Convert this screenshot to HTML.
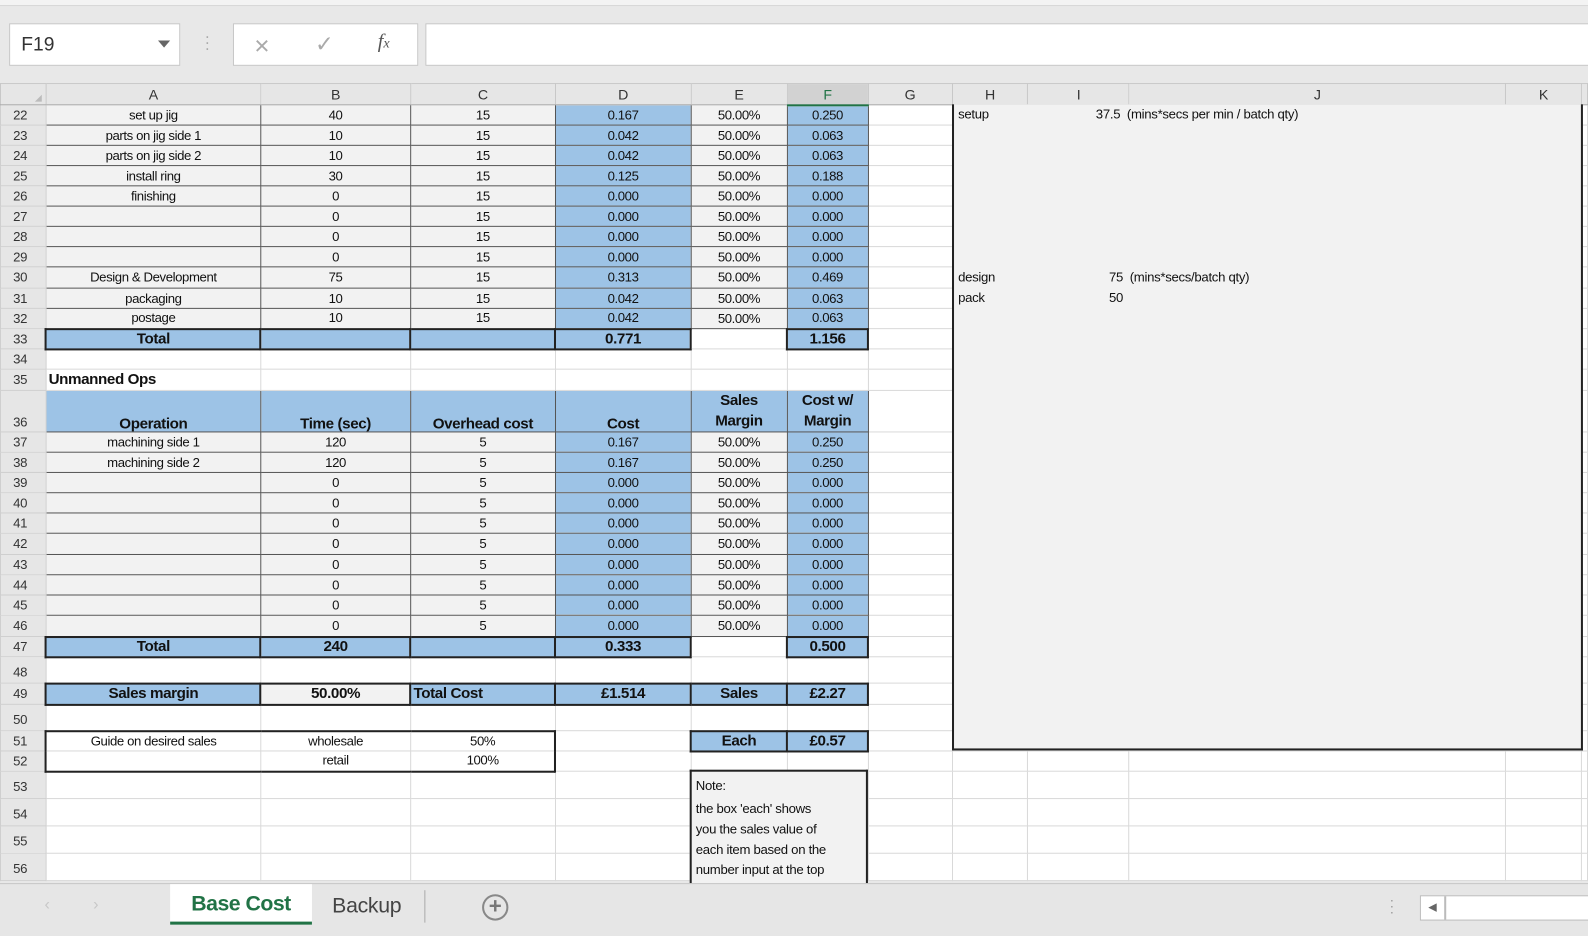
<!DOCTYPE html>
<html><head><meta charset="utf-8"><style>
*{margin:0;padding:0;box-sizing:border-box}
html,body{width:1588px;height:936px;overflow:hidden;background:#e6e6e6}
#w{position:absolute;left:0;top:0;width:1568px;height:924px;transform:scale(1.01276);transform-origin:0 0;font-family:"Liberation Sans",Arial,sans-serif;background:#e8e8e8}
.abs{position:absolute}
table{position:absolute;left:0;top:82px;border-collapse:collapse;table-layout:fixed;background:#fff;font-size:13px;letter-spacing:-0.4px;color:#111}
td{border:1px solid #d9d9d9;text-align:center;white-space:nowrap;overflow:hidden;padding:0 2px;line-height:14px}
td.rn{background:#e6e6e6;color:#333;text-align:left;padding-left:12px;border-color:#cfcfcf;font-size:13px}
tr.hd td{background:#e6e6e6;color:#333;font-size:14px;border-color:#c8c8c8;border-bottom:1px solid #aaa}
td.g{background:#f2f2f2;border:1px solid #555}
td.b{background:#9dc3e6;border:1px solid #555}
td.B{background:#9dc3e6;border:2px solid #222;font-weight:bold;font-size:15px}
td.W{border:2px solid #222;font-weight:bold;font-size:15px;background:#f2f2f2}
.bold{font-weight:bold;font-size:15px}
</style></head><body><div id="w">
<div class="abs" style="left:0;top:0;width:1568px;height:6px;background:#f3f3f3;border-bottom:1px solid #d6d6d6"></div>
<div class="abs" style="left:9px;top:23px;width:169px;height:42px;background:#fff;border:1px solid #c6c6c6;font-size:19px;color:#333;padding:10px 0 0 11px">F19<span style="position:absolute;left:146px;top:16px;width:0;height:0;border-left:6px solid transparent;border-right:6px solid transparent;border-top:7px solid #666"></span></div>
<div class="abs" style="left:202px;top:34px;color:#aaa;font-size:16px;line-height:6px">·<br>·<br>·</div>
<div class="abs" style="left:230px;top:23px;width:183px;height:42px;background:#fff;border:1px solid #c6c6c6;color:#aaa">
<span class="abs" style="left:20px;top:6px;font-size:26px">×</span>
<span class="abs" style="left:80px;top:7px;font-size:22px">✓</span>
<span class="abs" style="left:142px;top:6px;font-size:20px;font-family:'Liberation Serif',serif;font-style:italic;color:#555">f<span style="font-size:14px">x</span></span></div>
<div class="abs" style="left:420px;top:23px;width:1160px;height:42px;background:#fff;border:1px solid #c6c6c6"></div>

<table>
<colgroup><col style="width:45px"><col style="width:212px"><col style="width:148px"><col style="width:143px"><col style="width:134px"><col style="width:95px"><col style="width:80px"><col style="width:83px"><col style="width:75px"><col style="width:100px"><col style="width:372px"><col style="width:75px"><col style="width:6px"></colgroup>
<tr class="hd" style="height:21px"><td class="rn" style="padding:0"><span style="color:#bbb;font-size:9px;float:right;margin:6px 4px 0 0">◢</span></td><td>A</td><td>B</td><td>C</td><td>D</td><td>E</td><td style="background:#d2d2d2;color:#217346;border-bottom:2px solid #217346">F</td><td>G</td><td>H</td><td>I</td><td>J</td><td>K</td><td></td></tr>
<tr style="height:20px"><td class="rn">22</td><td class="g">set up jig</td><td class="g">40</td><td class="g">15</td><td class="b">0.167</td><td class="g">50.00%</td><td class="b">0.250</td><td></td><td></td><td></td><td></td><td></td><td></td></tr>
<tr style="height:20px"><td class="rn">23</td><td class="g">parts on jig side 1</td><td class="g">10</td><td class="g">15</td><td class="b">0.042</td><td class="g">50.00%</td><td class="b">0.063</td><td></td><td></td><td></td><td></td><td></td><td></td></tr>
<tr style="height:20px"><td class="rn">24</td><td class="g">parts on jig side 2</td><td class="g">10</td><td class="g">15</td><td class="b">0.042</td><td class="g">50.00%</td><td class="b">0.063</td><td></td><td></td><td></td><td></td><td></td><td></td></tr>
<tr style="height:20px"><td class="rn">25</td><td class="g">install ring</td><td class="g">30</td><td class="g">15</td><td class="b">0.125</td><td class="g">50.00%</td><td class="b">0.188</td><td></td><td></td><td></td><td></td><td></td><td></td></tr>
<tr style="height:20px"><td class="rn">26</td><td class="g">finishing</td><td class="g">0</td><td class="g">15</td><td class="b">0.000</td><td class="g">50.00%</td><td class="b">0.000</td><td></td><td></td><td></td><td></td><td></td><td></td></tr>
<tr style="height:20px"><td class="rn">27</td><td class="g"></td><td class="g">0</td><td class="g">15</td><td class="b">0.000</td><td class="g">50.00%</td><td class="b">0.000</td><td></td><td></td><td></td><td></td><td></td><td></td></tr>
<tr style="height:20px"><td class="rn">28</td><td class="g"></td><td class="g">0</td><td class="g">15</td><td class="b">0.000</td><td class="g">50.00%</td><td class="b">0.000</td><td></td><td></td><td></td><td></td><td></td><td></td></tr>
<tr style="height:20px"><td class="rn">29</td><td class="g"></td><td class="g">0</td><td class="g">15</td><td class="b">0.000</td><td class="g">50.00%</td><td class="b">0.000</td><td></td><td></td><td></td><td></td><td></td><td></td></tr>
<tr style="height:21px"><td class="rn">30</td><td class="g">Design &amp; Development</td><td class="g">75</td><td class="g">15</td><td class="b">0.313</td><td class="g">50.00%</td><td class="b">0.469</td><td></td><td></td><td></td><td></td><td></td><td></td></tr>
<tr style="height:20px"><td class="rn">31</td><td class="g">packaging</td><td class="g">10</td><td class="g">15</td><td class="b">0.042</td><td class="g">50.00%</td><td class="b">0.063</td><td></td><td></td><td></td><td></td><td></td><td></td></tr>
<tr style="height:20px"><td class="rn">32</td><td class="g">postage</td><td class="g">10</td><td class="g">15</td><td class="b">0.042</td><td class="g">50.00%</td><td class="b">0.063</td><td></td><td></td><td></td><td></td><td></td><td></td></tr>
<tr style="height:20px"><td class="rn">33</td><td class="B">Total</td><td class="B"></td><td class="B"></td><td class="B">0.771</td><td></td><td class="B">1.156</td><td></td><td></td><td></td><td></td><td></td><td></td></tr>
<tr style="height:20px"><td class="rn">34</td><td></td><td></td><td></td><td></td><td></td><td></td><td></td><td></td><td></td><td></td><td></td><td></td></tr>
<tr style="height:21px"><td class="rn">35</td><td class="bold" style="text-align:left">Unmanned Ops</td><td></td><td></td><td></td><td></td><td></td><td></td><td></td><td></td><td></td><td></td><td></td></tr>
<tr style="height:40px"><td class="rn" style="vertical-align:bottom;padding-bottom:2px">36</td><td class="B" style="vertical-align:bottom;font-weight:bold;border-width:1px;border-color:#555">Operation</td><td class="B" style="vertical-align:bottom;border-width:1px;border-color:#555">Time (sec)</td><td class="B" style="vertical-align:bottom;border-width:1px;border-color:#555">Overhead cost</td><td class="B" style="vertical-align:bottom;border-width:1px;border-color:#555">Cost</td><td class="B" style="vertical-align:bottom;border-width:1px;border-color:#555;line-height:20px">Sales<br>Margin</td><td class="B" style="vertical-align:bottom;border-width:1px;border-color:#555;line-height:20px">Cost w/<br>Margin</td><td></td><td></td><td></td><td></td><td></td><td></td></tr>
<tr style="height:20px"><td class="rn">37</td><td class="g">machining side 1</td><td class="g">120</td><td class="g">5</td><td class="b">0.167</td><td class="g">50.00%</td><td class="b">0.250</td><td></td><td></td><td></td><td></td><td></td><td></td></tr>
<tr style="height:20px"><td class="rn">38</td><td class="g">machining side 2</td><td class="g">120</td><td class="g">5</td><td class="b">0.167</td><td class="g">50.00%</td><td class="b">0.250</td><td></td><td></td><td></td><td></td><td></td><td></td></tr>
<tr style="height:20px"><td class="rn">39</td><td class="g"></td><td class="g">0</td><td class="g">5</td><td class="b">0.000</td><td class="g">50.00%</td><td class="b">0.000</td><td></td><td></td><td></td><td></td><td></td><td></td></tr>
<tr style="height:20px"><td class="rn">40</td><td class="g"></td><td class="g">0</td><td class="g">5</td><td class="b">0.000</td><td class="g">50.00%</td><td class="b">0.000</td><td></td><td></td><td></td><td></td><td></td><td></td></tr>
<tr style="height:20px"><td class="rn">41</td><td class="g"></td><td class="g">0</td><td class="g">5</td><td class="b">0.000</td><td class="g">50.00%</td><td class="b">0.000</td><td></td><td></td><td></td><td></td><td></td><td></td></tr>
<tr style="height:21px"><td class="rn">42</td><td class="g"></td><td class="g">0</td><td class="g">5</td><td class="b">0.000</td><td class="g">50.00%</td><td class="b">0.000</td><td></td><td></td><td></td><td></td><td></td><td></td></tr>
<tr style="height:20px"><td class="rn">43</td><td class="g"></td><td class="g">0</td><td class="g">5</td><td class="b">0.000</td><td class="g">50.00%</td><td class="b">0.000</td><td></td><td></td><td></td><td></td><td></td><td></td></tr>
<tr style="height:20px"><td class="rn">44</td><td class="g"></td><td class="g">0</td><td class="g">5</td><td class="b">0.000</td><td class="g">50.00%</td><td class="b">0.000</td><td></td><td></td><td></td><td></td><td></td><td></td></tr>
<tr style="height:20px"><td class="rn">45</td><td class="g"></td><td class="g">0</td><td class="g">5</td><td class="b">0.000</td><td class="g">50.00%</td><td class="b">0.000</td><td></td><td></td><td></td><td></td><td></td><td></td></tr>
<tr style="height:21px"><td class="rn">46</td><td class="g"></td><td class="g">0</td><td class="g">5</td><td class="b">0.000</td><td class="g">50.00%</td><td class="b">0.000</td><td></td><td></td><td></td><td></td><td></td><td></td></tr>
<tr style="height:20px"><td class="rn">47</td><td class="B">Total</td><td class="B">240</td><td class="B"></td><td class="B">0.333</td><td></td><td class="B">0.500</td><td></td><td></td><td></td><td></td><td></td><td></td></tr>
<tr style="height:26px"><td class="rn" style="vertical-align:bottom;padding-bottom:3px">48</td><td></td><td></td><td></td><td></td><td></td><td></td><td></td><td></td><td></td><td></td><td></td><td></td></tr>
<tr style="height:21px"><td class="rn">49</td><td class="B">Sales margin</td><td class="W">50.00%</td><td class="B" style="text-align:left">Total Cost</td><td class="B">£1.514</td><td class="B">Sales</td><td class="B">£2.27</td><td></td><td></td><td></td><td></td><td></td><td></td></tr>
<tr style="height:26px"><td class="rn" style="vertical-align:bottom;padding-bottom:3px">50</td><td></td><td></td><td></td><td></td><td></td><td></td><td></td><td></td><td></td><td></td><td></td><td></td></tr>
<tr style="height:20px"><td class="rn">51</td><td style="border-left:2px solid #222;border-top:2px solid #222">Guide on desired sales</td><td style="border-top:2px solid #222">wholesale</td><td style="border-top:2px solid #222;border-right:2px solid #222">50%</td><td></td><td class="B">Each</td><td class="B">£0.57</td><td></td><td></td><td></td><td></td><td></td><td></td></tr>
<tr style="height:20px"><td class="rn">52</td><td style="border-left:2px solid #222;border-bottom:2px solid #222"></td><td style="border-bottom:2px solid #222">retail</td><td style="border-bottom:2px solid #222;border-right:2px solid #222">100%</td><td></td><td></td><td></td><td></td><td></td><td></td><td></td><td></td><td></td></tr>
<tr style="height:27px"><td class="rn" style="padding-top:4px">53</td><td></td><td></td><td></td><td></td><td></td><td></td><td></td><td></td><td></td><td></td><td></td><td></td></tr>
<tr style="height:27px"><td class="rn" style="padding-top:4px">54</td><td></td><td></td><td></td><td></td><td></td><td></td><td></td><td></td><td></td><td></td><td></td><td></td></tr>
<tr style="height:27px"><td class="rn" style="padding-top:4px">55</td><td></td><td></td><td></td><td></td><td></td><td></td><td></td><td></td><td></td><td></td><td></td><td></td></tr>
<tr style="height:27px"><td class="rn" style="padding-top:4px">56</td><td></td><td></td><td></td><td></td><td></td><td></td><td></td><td></td><td></td><td></td><td></td><td></td></tr>
</table>

<div class="abs" style="left:940px;top:103px;width:623px;height:638px;background:#f2f2f2;border:2px solid #222;border-top:none;font-size:13px;letter-spacing:-0.3px;color:#111">
<span class="abs" style="left:4px;top:2px">setup</span>
<span class="abs" style="left:140px;top:2px">37.5&nbsp; (mins*secs per min / batch qty)</span>
<span class="abs" style="left:4px;top:163px">design</span>
<span class="abs" style="left:153px;top:163px">75&nbsp; (mins*secs/batch qty)</span>
<span class="abs" style="left:4px;top:183px">pack</span>
<span class="abs" style="left:153px;top:183px">50</span>
</div>

<div class="abs" style="left:681px;top:760px;width:176px;height:114px;background:#f2f2f2;border:2px solid #222;border-bottom:none;font-size:13px;letter-spacing:-0.3px;color:#111;padding:4px 0 0 4px;line-height:20px">Note:<br><span style="display:block;margin-top:3px">the box 'each' shows<br>you the sales value of<br>each item based on the<br>number input at the top</span></div>

<div class="abs" style="left:0;top:872px;width:1568px;height:52px;background:#e6e6e6;border-top:1px solid #c6c6c6">
<span class="abs" style="left:44px;top:12px;color:#c8c8c8;font-size:16px">‹</span>
<span class="abs" style="left:92px;top:12px;color:#c8c8c8;font-size:16px">›</span>
<div class="abs" style="left:168px;top:0;width:140px;height:40px;background:#fff;border-bottom:3px solid #217346;color:#217346;font-weight:bold;font-size:21px;text-align:center;line-height:40px;letter-spacing:-0.5px">Base Cost</div>
<div class="abs" style="left:328px;top:0;height:40px;line-height:43px;color:#444;font-size:21px;letter-spacing:-0.3px">Backup</div>
<div class="abs" style="left:419px;top:6px;width:1px;height:32px;background:#aaa"></div>
<div class="abs" style="left:476px;top:10px;width:26px;height:26px;border:2px solid #888;border-radius:50%;color:#777;text-align:center;line-height:20px;font-size:22px;font-weight:bold">+</div>
<div class="abs" style="left:1372px;top:12px;color:#999;font-size:14px;line-height:6px">·<br>·<br>·</div>
<div class="abs" style="left:1402px;top:11px;width:170px;height:25px;background:#fff;border:1px solid #bbb"><div style="width:25px;height:23px;border-right:2px solid #bbb;color:#666;font-size:11px;text-align:center;line-height:23px">◀</div></div>
</div>
</div></body></html>
